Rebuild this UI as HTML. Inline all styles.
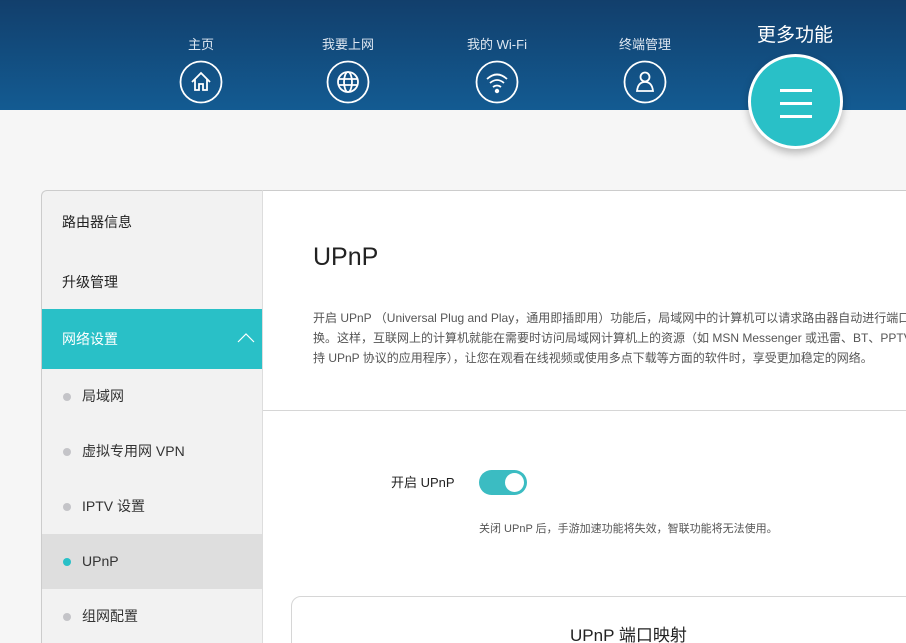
<!DOCTYPE html>
<html style="width:906px;height:643px;overflow:hidden"><head><meta charset="utf-8"><style>
*{margin:0;padding:0;box-sizing:border-box}
body{width:906px;height:643px;overflow:hidden;background:#f6f6f6;font-family:"Liberation Sans","Noto Sans CJK SC",sans-serif;position:relative}
.hdr{position:absolute;left:0;top:0;width:906px;height:110px;background:linear-gradient(#123f6c,#135b92)}
.nav{position:absolute;width:100px;text-align:center;color:#dfe8f2;font-size:13px;top:34px}
.ic{position:absolute;top:60px;width:44px;height:44px}
.big{position:absolute;left:748px;top:54px;width:95px;height:95px;border-radius:50%;background:#29c0c7;border:3px solid #fff;box-shadow:0 4px 8px rgba(0,0,0,.25)}
.big i{position:absolute;left:29px;width:32px;height:3px;background:#fff}
.more{position:absolute;left:745px;top:20px;width:100px;text-align:center;color:#fff;font-size:19px}
.side{position:absolute;left:41px;top:190px;width:222px;height:460px;background:#f2f2f2;border:1px solid #ccc;border-radius:6px 0 0 0;border-right:1px solid #ddd;overflow:hidden}
.si{position:absolute;left:20px;font-size:14px;color:#222}
.sub{position:absolute;left:0;width:220px;height:55px;font-size:14px;color:#333;line-height:55px;padding-left:40px}
.sub b{position:absolute;left:21px;top:24px;width:8px;height:8px;border-radius:50%;background:#c4c4c8}
.main{position:absolute;left:263px;top:190px;width:643px;height:453px;background:#fff;border-top:1px solid #ccc;overflow:hidden}
</style></head><body>
<div class="hdr">
<div class="nav" style="left:151px">主页</div>
<div class="nav" style="left:298px">我要上网</div>
<div class="nav" style="left:447px">我的 Wi-Fi</div>
<div class="nav" style="left:595px">终端管理</div>
<svg class="ic" style="left:179px" viewBox="0 0 44 44" fill="none" stroke="#fff" stroke-width="1.8"><circle cx="22" cy="22" r="20.5"/><path d="M13 22 L22 13 L31 22 M16 19 V30 H20 V24 H24 V30 H28 V19"/></svg>
<svg class="ic" style="left:326px" viewBox="0 0 44 44" fill="none" stroke="#fff" stroke-width="1.8"><circle cx="22" cy="22" r="20.5"/><circle cx="22" cy="22" r="10"/><ellipse cx="22" cy="22" rx="4" ry="10"/><path d="M12 19H32M12 25H32"/></svg>
<svg class="ic" style="left:475px" viewBox="0 0 44 44" fill="none" stroke="#fff" stroke-width="1.8"><circle cx="22" cy="22" r="20.5"/><path d="M12 19 Q22 10 32 19M15 23 Q22 17 29 23M18 27 Q22 24 26 27"/><circle cx="22" cy="31" r="1.3" fill="#fff"/></svg>
<svg class="ic" style="left:623px" viewBox="0 0 44 44" fill="none" stroke="#fff" stroke-width="1.8"><circle cx="22" cy="22" r="20.5"/><circle cx="22" cy="17" r="4.5"/><path d="M14 31 Q15 22 22 22 Q29 22 30 31 Z"/></svg>
</div>
<div class="more">更多功能</div>
<div class="big"><i style="top:32px"></i><i style="top:45px"></i><i style="top:58px"></i></div>

<div class="side">
<div class="si" style="top:21px">路由器信息</div>
<div class="si" style="top:81px">升级管理</div>
<div style="position:absolute;left:0;top:118px;width:221px;height:60px;background:#29c0c7;color:#fff;font-size:14px;line-height:60px;padding-left:20px">网络设置
<svg style="position:absolute;left:195px;top:24px" width="18" height="10" viewBox="0 0 18 10" fill="none" stroke="#fff" stroke-width="1.2"><path d="M1 9 L9 1 L17 9"/></svg></div>
<div class="sub" style="top:178px"><b></b>局域网</div>
<div class="sub" style="top:233px"><b></b>虚拟专用网 VPN</div>
<div class="sub" style="top:288px"><b></b>IPTV 设置</div>
<div class="sub" style="top:343px;background:#dedede"><b style="background:#29c0c7"></b>UPnP</div>
<div class="sub" style="top:398px"><b></b>组网配置</div>
</div>

<div class="main">
<div style="position:absolute;left:50px;top:52px;font-size:25px;color:#222">UPnP</div>
<div style="position:absolute;left:50px;top:117px;width:700px;font-size:12px;line-height:20px;color:#555;white-space:nowrap">开启 UPnP （Universal Plug and Play，通用即插即用）功能后，局域网中的计算机可以请求路由器自动进行端口<br>换。这样，互联网上的计算机就能在需要时访问局域网计算机上的资源（如 MSN Messenger 或迅雷、BT、PPTV<br>持 UPnP 协议的应用程序），让您在观看在线视频或使用多点下载等方面的软件时，享受更加稳定的网络。</div>
<div style="position:absolute;left:0;top:219px;width:643px;height:1px;background:#d6d6d6"></div>
<div style="position:absolute;left:128px;top:281px;font-size:13px;color:#222">开启 UPnP</div>
<div style="position:absolute;left:216px;top:279px;width:48px;height:25px;border-radius:13px;background:#3bbcc2"><div style="position:absolute;right:3px;top:3px;width:19px;height:19px;border-radius:50%;background:#fff"></div></div>
<div style="position:absolute;left:216px;top:329px;font-size:11px;color:#555">关闭 UPnP 后，手游加速功能将失效，智联功能将无法使用。</div>
<div style="position:absolute;left:28px;top:405px;width:640px;height:80px;border:1px solid #d6d6d6;border-radius:10px;background:#fff"></div>
<div style="position:absolute;left:307px;top:430px;font-size:17px;color:#222">UPnP 端口映射</div>
</div>
</body></html>
